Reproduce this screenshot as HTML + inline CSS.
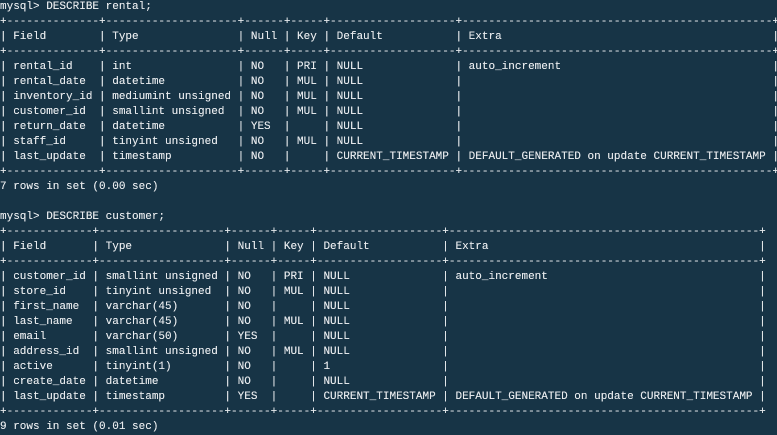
<!DOCTYPE html>
<html><head><meta charset="utf-8"><style>
html,body{margin:0;padding:0;background:#173446;width:777px;height:424px;overflow:hidden}
pre{margin:0;position:absolute;left:0;top:0;font-family:"Liberation Mono",monospace;font-size:11px;letter-spacing:0px;line-height:15px;color:#e6e9ec;text-shadow:0 0 0.3px #e6e9ec}
</style></head><body><pre>mysql&gt; DESCRIBE rental;
+--------------+--------------------+------+-----+-------------------+-----------------------------------------------+
| Field        | Type               | Null | Key | Default           | Extra                                         |
+--------------+--------------------+------+-----+-------------------+-----------------------------------------------+
| rental_id    | int                | NO   | PRI | NULL              | auto_increment                                |
| rental_date  | datetime           | NO   | MUL | NULL              |                                               |
| inventory_id | mediumint unsigned | NO   | MUL | NULL              |                                               |
| customer_id  | smallint unsigned  | NO   | MUL | NULL              |                                               |
| return_date  | datetime           | YES  |     | NULL              |                                               |
| staff_id     | tinyint unsigned   | NO   | MUL | NULL              |                                               |
| last_update  | timestamp          | NO   |     | CURRENT_TIMESTAMP | DEFAULT_GENERATED on update CURRENT_TIMESTAMP |
+--------------+--------------------+------+-----+-------------------+-----------------------------------------------+
7 rows in set (0.00 sec)

mysql&gt; DESCRIBE customer;
+-------------+-------------------+------+-----+-------------------+-----------------------------------------------+
| Field       | Type              | Null | Key | Default           | Extra                                         |
+-------------+-------------------+------+-----+-------------------+-----------------------------------------------+
| customer_id | smallint unsigned | NO   | PRI | NULL              | auto_increment                                |
| store_id    | tinyint unsigned  | NO   | MUL | NULL              |                                               |
| first_name  | varchar(45)       | NO   |     | NULL              |                                               |
| last_name   | varchar(45)       | NO   | MUL | NULL              |                                               |
| email       | varchar(50)       | YES  |     | NULL              |                                               |
| address_id  | smallint unsigned | NO   | MUL | NULL              |                                               |
| active      | tinyint(1)        | NO   |     | 1                 |                                               |
| create_date | datetime          | NO   |     | NULL              |                                               |
| last_update | timestamp         | YES  |     | CURRENT_TIMESTAMP | DEFAULT_GENERATED on update CURRENT_TIMESTAMP |
+-------------+-------------------+------+-----+-------------------+-----------------------------------------------+
9 rows in set (0.01 sec)
</pre></body></html>
